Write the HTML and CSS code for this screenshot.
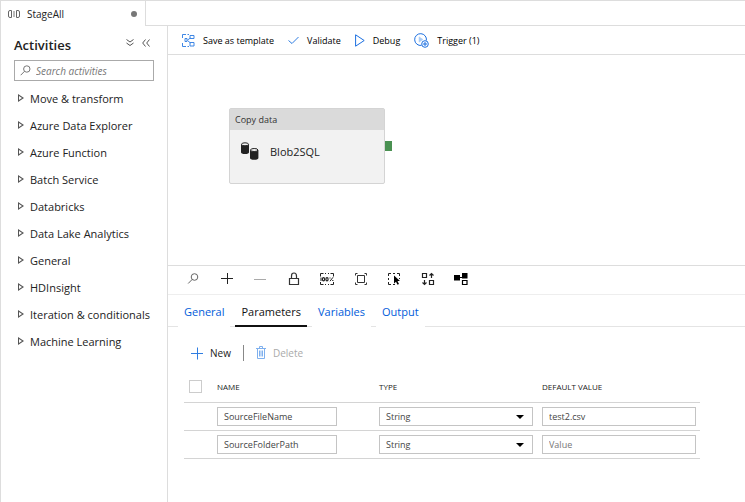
FILE: index.html
```html
<!DOCTYPE html>
<html lang="en">
<head>
  <meta charset="UTF-8">
  <meta name="viewport" content="width=device-width, initial-scale=1.0">
  <title>StageAll</title>
  <link rel="stylesheet" href="styles.css">
</head>
<body>
  <div class="app">
    <header class="tab-bar">
      <div class="file-tab">
        <svg width="12" height="8" viewBox="0 0 12 8" fill="none" stroke="#666">
          <path d="M3.500 .5H2Q.5 .5 .5 2v4q0 1.500 1.500 1.500h1.500zM8.500 .5H10q1.500 0 1.500 1.500v4q0 1.500-1.500 1.500H8.500z"/>
          <path d="M5.500 1v6M6.500 1v6" stroke="#bbb"/>
        </svg>
        <span class="file-name">StageAll</span>
        <span class="dirty-dot"></span>
      </div>
      <div class="tab-space"></div>
    </header>

    <div class="workspace">
      <aside class="sidebar">
        <div class="sidebar-head">
          <h1>Activities</h1>
          <button class="icon-btn" type="button" aria-label="Expand all">
            <svg width="8" height="8" viewBox="0 0 8 8" fill="none" stroke="#555"><path d="M.5 .5L4 3 7.500 .5M.5 4L4 6.500 7.500 4"/></svg>
          </button>
          <button class="icon-btn" type="button" aria-label="Collapse pane">
            <svg width="8" height="8" viewBox="0 0 8 8" fill="none" stroke="#555"><path d="M3.500 .5L.7 4l2.800 3.500M7.500 .5L4.700 4l2.800 3.500"/></svg>
          </button>
        </div>
        <div class="search">
          <svg width="11" height="11" viewBox="0 0 11 11" fill="none" stroke="#777"><circle cx="6.800" cy="4" r="3.200"/><path d="M4.500 6.300L.7 10.200"/></svg>
          <input type="text" placeholder="Search activities" aria-label="Search activities">
        </div>
        <ul class="activities">
          <li><button type="button">Move &amp; transform</button></li>
          <li><button type="button">Azure Data Explorer</button></li>
          <li><button type="button">Azure Function</button></li>
          <li><button type="button">Batch Service</button></li>
          <li><button type="button">Databricks</button></li>
          <li><button type="button">Data Lake Analytics</button></li>
          <li><button type="button">General</button></li>
          <li><button type="button">HDInsight</button></li>
          <li><button type="button">Iteration &amp; conditionals</button></li>
          <li><button type="button">Machine Learning</button></li>
        </ul>
      </aside>

      <main class="main">
        <div class="toolbar">
          <button type="button">
            <svg width="13" height="13" viewBox="0 0 13 13" fill="none" stroke="#3f87e5"><path d="M4 .5H.5V4M7 .5H5.500M.5 9v3.500H4M7 12.500H5.500M3 4.500h2v3H3zM5.500 6l3-2M5.500 6.500l3 2.500M8 1.500h4v3H8zM8 8.500h4v3.500H8z"/></svg>
            Save as template
          </button>
          <button type="button">
            <svg width="11" height="13" viewBox="0 0 11 13" fill="none" stroke="#2f7de1"><path d="M.5 6.500L4 9.500 10.500 3"/></svg>
            Validate
          </button>
          <button type="button">
            <svg width="10" height="13" viewBox="0 0 10 13" fill="none" stroke="#1b6fe0"><path d="M.6 .8v11.400L9.200 6.500z"/></svg>
            Debug
          </button>
          <button type="button">
            <svg width="15" height="15" viewBox="0 0 15 15" fill="none" stroke="#1b6fe0"><path d="M7.500 12.400A5.900 5.900 0 1 1 12.400 7.500"/><path d="M5 3.800v5.400L9 6.500z" fill="#a9cbf5" stroke="#a9cbf5" stroke-width=".5"/><circle cx="11" cy="11" r="3.300"/><path d="M11 9v4M9 11h4"/></svg>
            Trigger (1)
          </button>
        </div>

        <div class="canvas">
          <div class="node">
            <div class="node-title">Copy data</div>
            <div class="node-body">
              <svg width="18" height="18" viewBox="0 0 18 18"><g fill="#222"><path d="M0 2.200v8Q0 12 4 12t4-1.800v-8z"/><path d="M9 8v8q0 1.800 4.200 1.800T17.400 16V8z"/></g><g fill="#f2f2f2" stroke="#222"><ellipse cx="4" cy="2.300" rx="3.500" ry="1.500"/><ellipse cx="13.200" cy="8" rx="3.700" ry="1.500"/></g></svg>
              <span>Blob2SQL</span>
            </div>
            <span class="node-port"></span>
          </div>
        </div>

        <div class="canvas-tools">
          <button type="button" aria-label="Search">
            <svg viewBox="0 0 16 16" fill="none" stroke="#666"><circle cx="9.500" cy="6" r="3.300"/><path d="M7.200 8.400L3.200 12.500"/></svg>
          </button>
          <button type="button" aria-label="Zoom in">
            <svg viewBox="0 0 16 16" fill="none" stroke="#222"><path d="M2 7.500h12M8.500 2v11"/></svg>
          </button>
          <button type="button" aria-label="Zoom out">
            <svg viewBox="0 0 16 16" fill="none" stroke="#aaa"><path d="M2 8.500h12"/></svg>
          </button>
          <button type="button" aria-label="Lock canvas">
            <svg viewBox="0 0 16 16" fill="none" stroke="#333"><path d="M3.500 7.500h9v6h-9zM5.500 7.500V5q0-3 2.500-3t2.500 3v2.500" stroke-width="1.200"/></svg>
          </button>
          <button type="button" aria-label="Zoom to 100%">
            <svg viewBox="0 0 16 16" fill="none" stroke="#222"><path d="M4.500 2.500h-3v3M11.500 2.500h3v3M1.500 11v2.500h3M14.500 11v2.500h-3M6 2.500h1M9 2.500h1M6 13.500h1M9 13.500h1"/><path d="M2 6.500v3.500"/><ellipse cx="4.500" cy="8.200" rx="1.100" ry="1.600" stroke-width="1.200"/><ellipse cx="8" cy="8.200" rx="1.100" ry="1.600" stroke-width="1.200"/><path d="M14 6.300l-3 3.900M10.500 7h1M13.200 9.500h1.200"/></svg>
          </button>
          <button type="button" aria-label="Zoom to fit">
            <svg viewBox="0 0 16 16" fill="none" stroke="#333"><path d="M4.500 4.500h7v7h-7z"/><path d="M4.500 2.500h-2v2M11.500 2.500h2v2M2.500 11.500v2h2M13.500 11.500v2h-2"/></svg>
          </button>
          <button type="button" aria-label="Select">
            <svg viewBox="0 0 16 16" fill="none" stroke="#222"><path d="M2.500 5V2.500H5M7 2.500h2M11 2.500h2.500V5M2.500 7v2M2.500 11v2.500H5M7 13.500h2M13.500 7v1"/><path d="M8 4.500v8l2-1.800 1.500 3 1.500-.8-1.500-2.800h2.500z" fill="#000" stroke="none"/></svg>
          </button>
          <button type="button" aria-label="Auto align">
            <svg viewBox="0 0 16 16" fill="none" stroke="#222"><path d="M2.500 2.500h4v4h-4zM9.500 9.500h4v4h-4zM11.500 7V2.500M9.500 4.500l2-2 2 2M4.500 9v4.500M2.500 11.500l2 2 2-2" stroke-width="1.200"/></svg>
          </button>
          <button type="button" aria-label="Show lineage">
            <svg viewBox="0 0 16 16"><path d="M1 4h6v5.500H1zM9 2h5.500v5.500H9zM7 6h2v1H7z"/><path d="M9.500 9.500h4.500v4H9.500z" fill="none" stroke="#000" stroke-width="1.200"/></svg>
          </button>
        </div>

        <nav class="tabs">
          <a href="#">General</a>
          <a href="#" class="active">Parameters</a>
          <a href="#">Variables</a>
          <a href="#">Output</a>
        </nav>

        <div class="params">
          <div class="actions">
            <button type="button">
              <svg width="12" height="13" viewBox="0 0 12 13" fill="none" stroke="#2f7de1"><path d="M0 6.500h12M6.500 .5v12"/></svg>
              New
            </button>
            <span class="divider"></span>
            <button type="button" disabled>
              <svg width="10" height="14" viewBox="0 0 10 14" fill="none" stroke="#7fb0ee"><path d="M0 2.500h10M3.500 2V.5h3V2M1.500 2.500v10h7v-10M3.500 4.500v6M5 4.500v6M6.500 4.500v6"/></svg>
              Delete
            </button>
          </div>

          <table>
            <colgroup>
              <col class="col-check"><col class="col-name"><col class="col-type"><col>
            </colgroup>
            <thead>
              <tr>
                <th><input type="checkbox" aria-label="Select all"></th>
                <th>NAME</th>
                <th>TYPE</th>
                <th>DEFAULT VALUE</th>
              </tr>
            </thead>
            <tbody>
              <tr>
                <td></td>
                <td><input class="field name-field" type="text" value="SourceFileName" aria-label="Name"></td>
                <td><div class="select"><select class="field" aria-label="Type"><option>String</option></select></div></td>
                <td><input class="field" type="text" value="test2.csv" aria-label="Default value"></td>
              </tr>
              <tr>
                <td></td>
                <td><input class="field name-field" type="text" value="SourceFolderPath" aria-label="Name"></td>
                <td><div class="select"><select class="field" aria-label="Type"><option>String</option></select></div></td>
                <td><input class="field" type="text" placeholder="Value" aria-label="Default value"></td>
              </tr>
            </tbody>
          </table>
        </div>
      </main>
    </div>
  </div>
</body>
</html>
```
FILE: styles.css
```css
* {
  box-sizing: border-box;
}
body {
  margin: 0;
  font-family: "Segoe UI", "Open Sans", sans-serif;
  font-size: 10px;
  color: #222;
  background: #fff;
}
button, input, select {
  font: inherit;
  color: inherit;
}
button {
  padding: 0;
  border: none;
  background: none;
  cursor: pointer;
}
svg {
  display: block;
  flex: none;
}
.app {
  display: flex;
  flex-direction: column;
  min-height: 100vh;
  border-top: 1px solid #ddd;
  border-left: 1px solid #ddd;
}

/* open file tabs */
.tab-bar {
  display: flex;
  height: 25px;
}
.file-tab {
  display: flex;
  align-items: center;
  width: 145px;
  padding: 0 8px 0 7px;
  border-right: 1px solid #ddd;
}
.file-name {
  margin-left: 7px;
}
.dirty-dot {
  width: 6px;
  height: 6px;
  margin-left: auto;
  border-radius: 50%;
  background: #777;
}
.tab-space {
  flex: 1;
  border-bottom: 1px solid #ddd;
}
.workspace {
  display: flex;
  flex: 1;
}

/* activities */
.sidebar {
  flex: none;
  width: 166px;
  padding: 0 13px;
}
.sidebar-head {
  display: flex;
  align-items: center;
  gap: 8px;
  height: 34px;
  padding-right: 4px;
}
.sidebar-head h1 {
  flex: 1;
  margin: 4px 0 0;
  font-size: 13px;
  font-weight: 600;
}
.search {
  display: flex;
  align-items: center;
  gap: 5px;
  height: 21px;
  padding: 0 5px;
  border: 1px solid #aaa;
}
.search input {
  flex: 1;
  min-width: 0;
  padding: 0;
  border: none;
  outline: none;
}
.search input::placeholder {
  font-style: italic;
  color: #777;
}
.activities {
  margin: 4px 0 0;
  padding: 0;
  list-style: none;
}
.activities button {
  position: relative;
  display: flex;
  align-items: center;
  height: 27px;
  padding-left: 16px;
  font-size: 11px;
}
.activities button::before,
.activities button::after {
  content: "";
  position: absolute;
  left: 4px;
  top: 9px;
  border: 4px solid transparent;
  border-left: 6px solid #555;
  border-right: none;
}
.activities button::after {
  left: 5px;
  top: 11px;
  border-width: 2px;
  border-left: 3px solid #fff;
}

/* pipeline toolbar */
.main {
  display: flex;
  flex: 1;
  flex-direction: column;
  min-width: 0;
  border-left: 1px solid #ddd;
}
.toolbar {
  display: flex;
  align-items: center;
  gap: 14px;
  height: 29px;
  padding-left: 14px;
  border-bottom: 1px solid #ddd;
  font-size: 9px;
}
.toolbar button {
  display: flex;
  align-items: center;
  gap: 8px;
  color: #000;
}

/* design canvas */
.canvas {
  height: 211px;
  padding: 53px 61px;
  border-bottom: 1px solid #ddd;
}
.node {
  position: relative;
  width: 156px;
  height: 76px;
  border: 1px solid #d4d4d4;
  border-radius: 2px;
  background: #f2f2f2;
}
.node-title {
  height: 21px;
  padding: 0 5px;
  font-size: 9px;
  line-height: 22px;
  background: #dadada;
  color: #333;
}
.node-body {
  display: flex;
  align-items: center;
  gap: 11px;
  padding: 12px 11px;
  font-size: 11px;
}
.node-port {
  position: absolute;
  left: 155px;
  top: 32px;
  width: 7px;
  height: 10px;
  background: #4a9152;
}
.canvas-tools {
  display: flex;
  align-items: center;
  justify-content: space-between;
  width: 302px;
  height: 28px;
  padding: 0 1px 3px 17px;
}
.canvas-tools svg {
  width: 16px;
  height: 16px;
}

/* property tabs */
.tabs {
  display: flex;
  gap: 5px;
  height: 33px;
  padding-left: 10px;
  border-top: 1px solid #eee;
  background: linear-gradient(#e4e4e4, #e4e4e4) 0 31px / 100% 1px no-repeat;
}
.tabs a {
  padding: 9px 6px 0;
  border-bottom: 2px solid #fff;
  background: #fff;
  font-size: 11px;
  line-height: 16px;
  color: #015cda;
  text-decoration: none;
}
.tabs .active {
  border-color: #111;
  color: #111;
}

/* parameter list */
.params {
  padding: 16px 45px 0 16px;
}
.actions {
  display: flex;
  align-items: center;
  gap: 12px;
  height: 20px;
  padding-left: 7px;
}
.actions button {
  display: flex;
  align-items: center;
  gap: 7px;
}
.actions button:disabled {
  color: #aaa;
}
.divider {
  width: 1px;
  height: 16px;
  background: #888;
}
table {
  width: 100%;
  margin-top: 8px;
  border-collapse: collapse;
  table-layout: fixed;
}
.col-check {
  width: 33px;
}
.col-name {
  width: 162px;
}
.col-type {
  width: 163px;
}
tr {
  border-bottom: 1px solid #d4d4d4;
}
th {
  height: 31px;
  padding: 0;
  font-size: 8px;
  font-weight: 400;
  text-align: left;
  color: #222;
}
th input {
  display: block;
  width: 13px;
  height: 13px;
  margin: 0 0 0 5px;
  appearance: none;
  border: 1px solid #ccc;
  background: #fff;
}
td {
  height: 28px;
  padding: 0 4px 0 0;
}
td:nth-child(3) {
  padding-right: 9px;
}
.field {
  display: block;
  width: 100%;
  height: 19px;
  padding: 0 6px;
  appearance: none;
  border: 1px solid #c4c4c4;
  border-radius: 0;
  background: #fff;
  font-size: 9px;
  color: #444;
}
.field::placeholder {
  color: #777;
}
.name-field {
  width: 120px;
}
.select {
  position: relative;
}
.select::after {
  content: "";
  position: absolute;
  right: 9px;
  top: 8px;
  border: 4px solid transparent;
  border-top-color: #000;
  border-bottom: none;
  pointer-events: none;
}
```
